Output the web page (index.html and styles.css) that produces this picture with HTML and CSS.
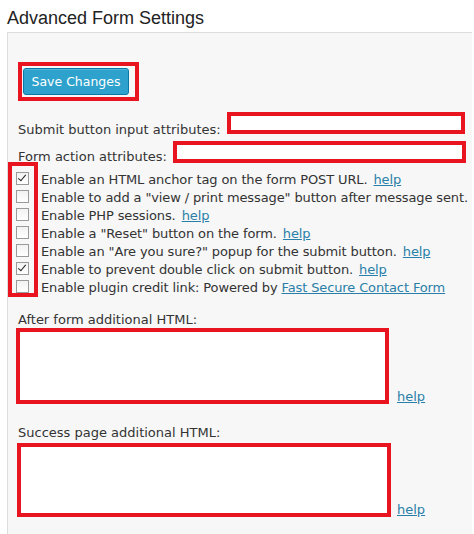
FILE: index.html
```html
<!DOCTYPE html>
<html>
<head>
<meta charset="utf-8">
<link rel="stylesheet" href="styles.css">
</head>
<body>
<h2 class="title">Advanced Form Settings</h2>
<div class="panel">
  <div class="btn-wrap mark"><button class="save">Save Changes</button></div>

  <div class="field-row first">
    <span class="label">Submit button input attributes:</span>
    <span class="input mark w1"></span>
  </div>
  <div class="field-row second">
    <span class="label">Form action attributes:</span>
    <span class="input mark w2"></span>
  </div>

  <div class="options">
    <div class="checks mark">
      <span class="cb checked"></span>
      <span class="cb"></span>
      <span class="cb"></span>
      <span class="cb"></span>
      <span class="cb"></span>
      <span class="cb checked"></span>
      <span class="cb"></span>
    </div>
    <div class="opt-text">
      <div class="line">Enable an HTML anchor tag on the form POST URL. <a class="help">help</a></div>
      <div class="line">Enable to add a "view / print message" button after message sent.</div>
      <div class="line">Enable PHP sessions. <a class="help">help</a></div>
      <div class="line">Enable a "Reset" button on the form. <a class="help">help</a></div>
      <div class="line">Enable an "Are you sure?" popup for the submit button. <a class="help">help</a></div>
      <div class="line">Enable to prevent double click on submit button. <a class="help">help</a></div>
      <div class="line">Enable plugin credit link: <span class="powered">Powered by <a class="help">Fast Secure Contact Form</a></span></div>
    </div>
  </div>

  <div class="block b1">
    <div class="label">After form additional HTML:</div>
    <div class="ta-row">
      <span class="textarea mark t1"></span>
      <a class="help">help</a>
    </div>
  </div>

  <div class="block b2">
    <div class="label">Success page additional HTML:</div>
    <div class="ta-row">
      <span class="textarea mark t2"></span>
      <a class="help">help</a>
    </div>
  </div>
</div>
</body>
</html>
```

FILE: styles.css
```css
html, body {
  margin: 0;
  padding: 0;
  background: #ffffff;
}
body {
  font-family: "DejaVu Sans", Verdana, sans-serif;
  font-size: 13px;
  color: #333333;
}
.title {
  margin: 0;
  height: 32px;
  padding: 7px 0 0 7px;
  box-sizing: border-box;
  font-family: "Liberation Sans", Arial, sans-serif;
  font-size: 18px;
  font-weight: normal;
  line-height: 22px;
  color: #222222;
}
.panel {
  margin-left: 7px;
  margin-right: 2px;
  border-left: 1px solid #dcdcdc;
  border-top: 1px solid #dcdcdc;
  background: #f7f7f7;
  padding: 29px 0 20px 10px;
  height: 502px;
  box-sizing: border-box;
}
.mark {
  border: 4px solid #e8141f;
  box-sizing: border-box;
}
.btn-wrap {
  display: inline-flex;
  width: 121px;
  height: 39px;
  padding: 2px 0 0 1px;
}
.save {
  width: 106px;
  height: 27px;
  background: #2ea2cc;
  border: 1px solid #0a78a6;
  border-radius: 3px;
  color: #ffffff;
  font-family: "DejaVu Sans", Verdana, sans-serif;
  font-size: 12.5px;
  padding: 0;
  box-shadow: inset 0 1px 0 rgba(120,200,230,0.5);
}
.field-row {
  display: flex;
  align-items: flex-end;
  height: 22px;
}
.field-row.first { margin-top: 11px; }
.field-row.second { margin-top: 7px; }
.field-row .label {
  line-height: 14px;
}
.field-row.first .label { margin-bottom: -3px; }
.field-row.second .label { margin-bottom: -1px; }
.input {
  display: block;
  height: 22px;
  background: #ffffff;
  flex-shrink: 0;
}
.w1 { width: 238px; margin-left: 6px; }
.w2 { width: 293px; margin-left: 6px; }
.options {
  display: flex;
  margin-left: -10px;
  margin-top: -1px;
}
.checks {
  flex-shrink: 0;
  width: 30px;
  height: 135px;
  display: flex;
  flex-direction: column;
  padding: 3px 0 0 4px;
}
.cb {
  display: block;
  flex-shrink: 0;
  width: 13px;
  height: 13px;
  margin: 3px 0 2px 0;
  border: 1px solid #9a9a9a;
  box-sizing: border-box;
  background: linear-gradient(#f2f2f2, #ffffff);
  position: relative;
}
.cb.checked::after {
  content: "";
  position: absolute;
  left: 3px;
  top: 0px;
  width: 3px;
  height: 7px;
  border: solid #222;
  border-width: 0 1.6px 1.6px 0;
  transform: rotate(40deg);
}
.opt-text {
  margin-left: 3px;
  padding-top: 9px;
  letter-spacing: -0.12px;
}
.line {
  height: 18px;
  line-height: 18px;
  white-space: nowrap;
}
.help {
  color: #2a7fa8;
  text-decoration: underline;
  margin-left: 2px;
}
.powered .help { margin-left: 0; }
.block .label {
  line-height: 16px;
}
.b1 { margin-top: 15px; }
.b2 { margin-top: 21px; }
.b2 .label { margin-bottom: 2px; }
.ta-row {
  display: flex;
  align-items: flex-end;
}
.textarea {
  display: block;
  background: #ffffff;
  flex-shrink: 0;
}
.t1 { width: 373px; height: 76px; margin-left: -2px; }
.t2 { width: 374px; height: 74px; margin-left: -1px; }
.ta-row .help {
  margin-left: 8px;
  line-height: 14px;
}
.t2 + .help { margin-left: 6px; }
```
